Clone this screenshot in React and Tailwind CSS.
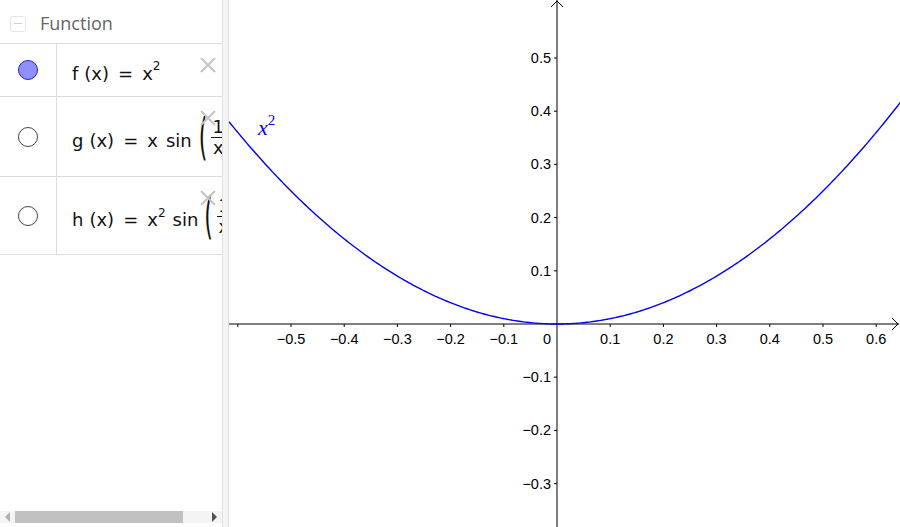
import React from "react";

const OX = 328;
const OY = 324;
const S = 532;

function Graph() {
  const pts = [];
  for (let px = 0; px <= 672; px += 2) {
    const x = (px - OX) / S;
    pts.push(`${px},${(OY - x * x * S).toFixed(2)}`);
  }
  const xTicks = [-6, -5, -4, -3, -2, -1, 1, 2, 3, 4, 5, 6];
  const yTicks = [5, 4, 3, 2, 1, -1, -2, -3];
  const fmt = (k) => (k < 0 ? "\u2212" : "") + "0." + Math.abs(k);
  return (
    <svg width="671" height="527" className="block shrink-0" style={{ fontFamily: '"Liberation Sans", Arial, sans-serif' }}>
      {/* axes */}
      <line x1="0" y1={OY} x2="670" y2={OY} stroke="#000" strokeWidth="1" />
      <polyline points={`663,${OY - 6} 669,${OY} 663,${OY + 6}`} fill="none" stroke="#000" strokeWidth="1" />
      <line x1={OX} y1="0" x2={OX} y2="527" stroke="#000" strokeWidth="1" />
      <polyline points={`${OX - 6},7 ${OX},1 ${OX + 6},7`} fill="none" stroke="#000" strokeWidth="1" />

      {xTicks.map((k) => {
        const x = OX + (k / 10) * S;
        return (
          <g key={k}>
            <line x1={x} y1={OY} x2={x} y2={OY + 3} stroke="#000" />
            {k !== -6 && (
              <text x={x} y={OY + 20} fontSize="14.5" textAnchor="middle" fill="#000">
                {fmt(k)}
              </text>
            )}
          </g>
        );
      })}
      <text x={OX - 6} y={OY + 20} fontSize="14.5" textAnchor="end" fill="#000">0</text>

      {yTicks.map((k) => {
        const y = OY - (k / 10) * S;
        return (
          <g key={k}>
            <line x1={OX - 3} y1={y} x2={OX} y2={y} stroke="#000" />
            <text x={OX - 6} y={y + 5} fontSize="14.5" textAnchor="end" fill="#000">
              {fmt(k)}
            </text>
          </g>
        );
      })}

      <polyline points={pts.join(" ")} fill="none" stroke="#0000ff" strokeWidth="1.4" />

      <text x="29" y="135" fill="#0000ff" fontSize="22" fontStyle="italic" style={{ fontFamily: '"Liberation Serif", serif' }}>
        x
        <tspan dy="-10" fontSize="15" fontStyle="normal">2</tspan>
      </text>
    </svg>
  );
}

function DeleteX() {
  return (
    <svg className="absolute right-[5px] top-[12px]" width="18" height="18" viewBox="0 0 18 18">
      <path d="M2 2 L16 16 M16 2 L2 16" stroke="#c4c4c4" strokeWidth="2" />
    </svg>
  );
}

function Paren({ className = "" }) {
  return (
    <span className={`inline-block text-[22px] leading-none text-[#111] scale-y-[2.3] ${className}`}>(</span>
  );
}

function Frac() {
  return (
    <span className="inline-flex flex-col items-center -translate-y-[3px] ml-[4px]">
      <span className="leading-[20px]">1</span>
      <span className="w-[14px] h-[1px] bg-[#111]" />
      <span className="leading-[20px]">x</span>
    </span>
  );
}

export default function App() {
  const math = { fontFamily: '"DejaVu Sans", sans-serif' };
  return (
    <div className="flex w-[900px] h-[527px] bg-white overflow-hidden">
      {/* Algebra view */}
      <div className="w-[222px] shrink-0 flex flex-col overflow-hidden" style={{ fontFamily: '"Open Sans", sans-serif' }}>
        <div className="h-[44px] shrink-0 flex items-center pt-[4px] border-b border-[#dcdcdc]">
          <div className="ml-[10px] w-[16px] h-[16px] border border-[#e6e6e6] rounded-[3px] flex items-center justify-center">
            <div className="w-[8px] h-[1px] bg-[#cfcfcf]" />
          </div>
          <span className="ml-[14px] text-[18px] text-[#666]">Function</span>
        </div>

        {/* f */}
        <div className="relative h-[53px] shrink-0 flex border-b border-[#dcdcdc]">
          <div className="w-[57px] shrink-0 border-r border-[#dcdcdc] flex items-center justify-center">
            <div className="w-[20px] h-[20px] rounded-full bg-[#8f8fff] border border-[#2020e0]" />
          </div>
          <div className="flex items-center pl-[15px] pt-[6px] text-[18px] text-[#111] whitespace-nowrap" style={math}>
            <span>f</span>
            <span className="ml-[6px]">(x)</span>
            <span className="mx-[9px]">=</span>
            <span>x</span>
            <sup className="text-[12px] -mt-[2px]">2</sup>
          </div>
          <DeleteX />
        </div>

        {/* g */}
        <div className="relative h-[80px] shrink-0 flex border-b border-[#dcdcdc]">
          <div className="w-[57px] shrink-0 border-r border-[#dcdcdc] flex items-center justify-center">
            <div className="w-[20px] h-[20px] rounded-full bg-white border border-[#444]" />
          </div>
          <div className="flex items-center pl-[15px] pt-[8px] text-[18px] text-[#111] whitespace-nowrap" style={math}>
            <span>g</span>
            <span className="ml-[6px]">(x)</span>
            <span className="mx-[9px]">=</span>
            <span>x</span>
            <span className="ml-[8px]">sin</span>
            <Paren className="ml-[7px] -translate-y-[3px]" />
            <Frac />
          </div>
          <DeleteX />
        </div>

        {/* h */}
        <div className="relative h-[78px] shrink-0 flex border-b border-[#dcdcdc]">
          <div className="w-[57px] shrink-0 border-r border-[#dcdcdc] flex items-center justify-center">
            <div className="w-[20px] h-[20px] rounded-full bg-white border border-[#444]" />
          </div>
          <div className="flex items-center pl-[15px] pt-[8px] text-[18px] text-[#111] whitespace-nowrap" style={math}>
            <span>h</span>
            <span className="ml-[6px]">(x)</span>
            <span className="mx-[9px]">=</span>
            <span>x</span>
            <sup className="text-[12px] -mt-[2px]">2</sup>
            <span className="ml-[7px]">sin</span>
            <Paren className="ml-[6px] -translate-y-[3px]" />
            <Frac />
          </div>
          <DeleteX />
        </div>

        {/* scrollbar */}
        <div className="mt-auto mb-[4px] h-[12px] flex items-center bg-[#f4f4f4]">
          <div className="w-[15px] flex justify-center">
            <div className="w-0 h-0 border-y-[5px] border-y-transparent border-r-[5px] border-r-[#b0b0b0]" />
          </div>
          <div className="w-[168px] h-[12px] bg-[#c1c1c1]" />
          <div className="flex-1" />
          <div className="w-[15px] flex justify-center">
            <div className="w-0 h-0 border-y-[5px] border-y-transparent border-l-[5px] border-l-[#505050]" />
          </div>
        </div>
      </div>

      {/* splitter */}
      <div className="w-[7px] shrink-0 bg-[#f5f5f5] border-x border-[#e0e0e0]" />

      <Graph />
    </div>
  );
}
